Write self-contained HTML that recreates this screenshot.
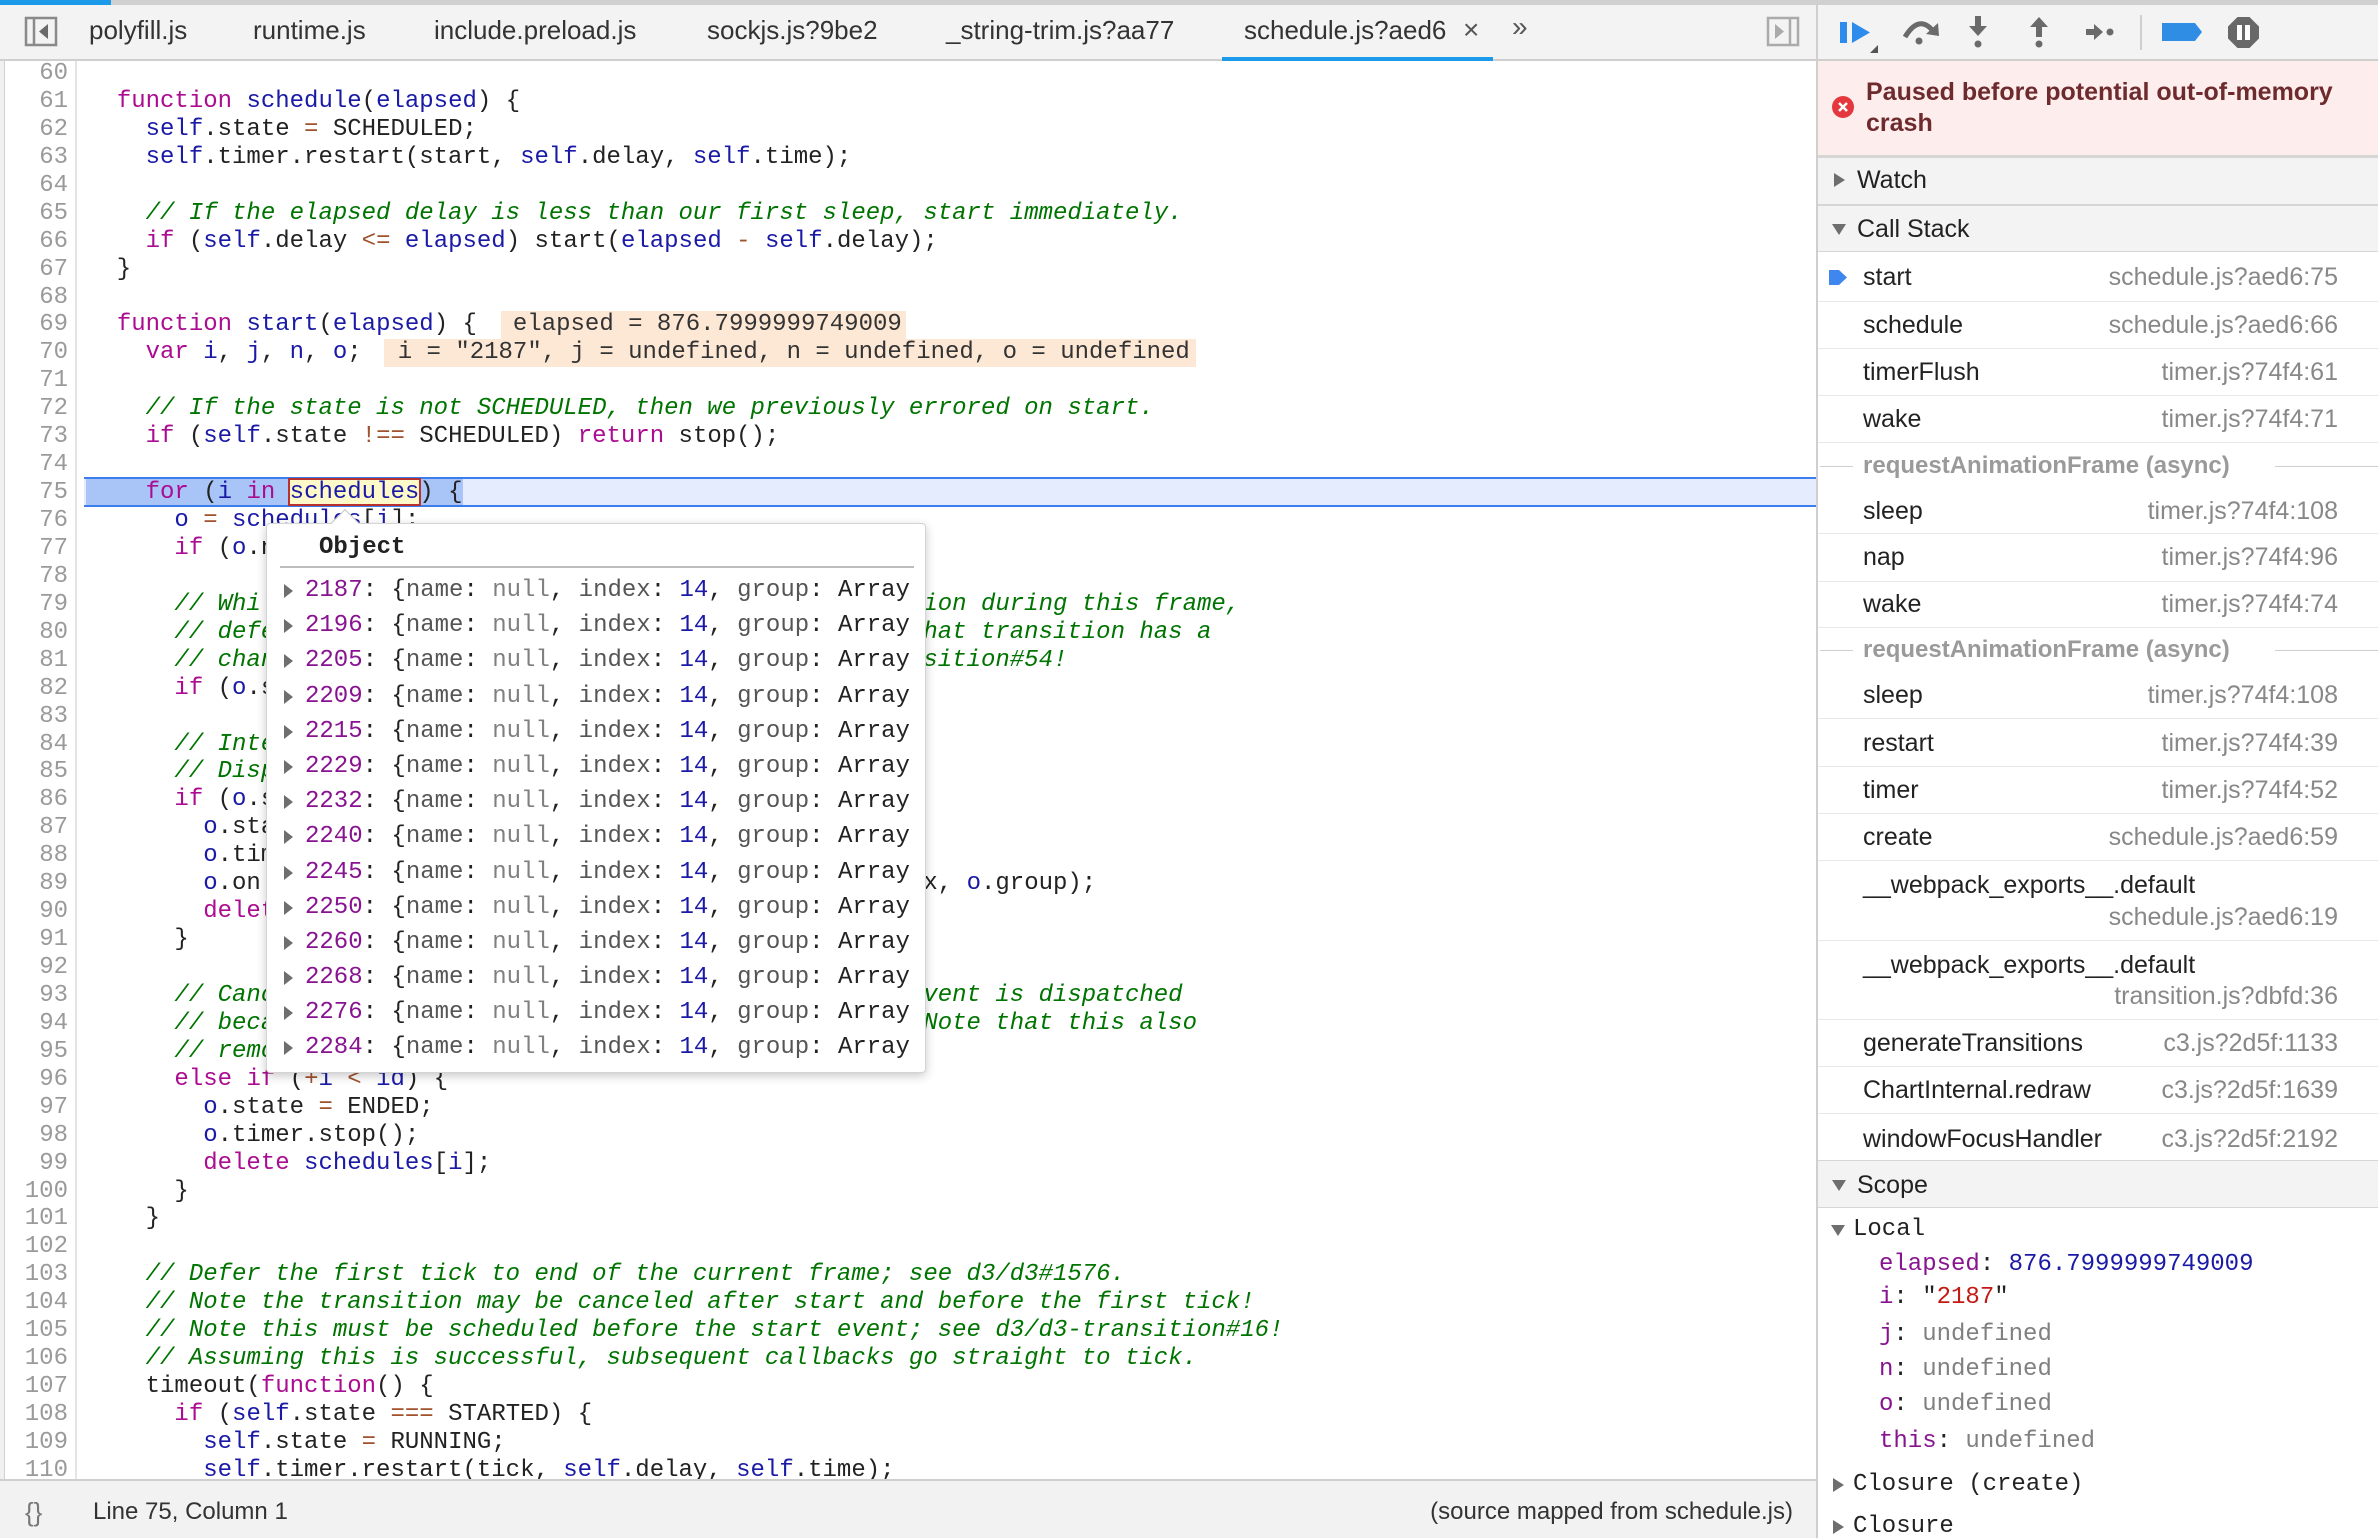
<!DOCTYPE html>
<html><head><meta charset="utf-8">
<style>
*{margin:0;padding:0;box-sizing:border-box}
html,body{width:2378px;height:1538px;overflow:hidden;background:#fff}
body{position:relative;font-family:"Liberation Sans",sans-serif;color:#222}
.a{position:absolute;white-space:pre}
.mono{font-family:"Liberation Mono",monospace;font-size:24px}
k{color:#aa0d91}v{color:#1a1aa6}o{color:#a0522d}c{color:#007400;font-style:italic}t{color:#c41a16}
#code,#gut,#plist{white-space:normal}
#code div{height:27.95px;line-height:27.95px;white-space:pre}
#gut div{height:27.95px;line-height:27.95px;text-align:right}
.tab{position:absolute;top:15px;font-size:26px;color:#333;line-height:30px}
.row{position:absolute;left:1818px;width:560px;height:30px;line-height:30px;font-size:25px}
.row .n{position:absolute;left:45px;color:#222}
.row .l{position:absolute;right:40px;color:#888}
.hl{position:absolute;left:1818px;width:560px;height:1px;background:#e8e8e8}
.hdr{position:absolute;left:1818px;width:560px;background:#f3f3f3;border-top:1px solid #d6d6d6;border-bottom:1px solid #d6d6d6;font-size:25px;color:#222}
.tri-r{position:absolute;width:0;height:0;border-top:7px solid transparent;border-bottom:7px solid transparent;border-left:11px solid #6e6e6e}
.tri-d{position:absolute;width:0;height:0;border-left:7px solid transparent;border-right:7px solid transparent;border-top:11px solid #6e6e6e}
.pr{height:35.2px;line-height:35.2px;white-space:pre;position:relative}
.pr:before{content:"";position:absolute;left:-21px;top:11px;border-top:7px solid transparent;border-bottom:7px solid transparent;border-left:9px solid #6e6e6e}
.pk{color:#881391}.pn{color:#555}.pg{color:#808080}.pb{color:#1a1aa6}
.async{position:absolute;left:1818px;width:560px;height:30px;line-height:30px;font-size:24px;font-weight:bold;color:#9a9a9a}
</style></head><body>

<div class="a" style="left:0;top:0;width:5px;height:1538px;background:#f0f0f0;border-right:1px solid #d0d0d0"></div>

<div class="a" style="left:0;top:0;width:1818px;height:61px;background:#f3f3f3;border-top:5px solid #d0d0d0;border-bottom:2px solid #cfcfcf"></div>
<div class="a" style="left:0;top:0;width:111px;height:5px;background:#1a9ae8"></div>
<svg class="a" style="left:24px;top:16px" width="36" height="32"><rect x="2" y="2" width="30" height="27" fill="none" stroke="#8a8a8a" stroke-width="2.5"/><line x1="10" y1="2" x2="10" y2="29" stroke="#8a8a8a" stroke-width="2.5"/><polygon points="24,8 24,23 15,15.5" fill="#6a6a6a"/></svg>
<div class="tab" style="left:89px">polyfill.js</div>
<div class="tab" style="left:253px">runtime.js</div>
<div class="tab" style="left:434px">include.preload.js</div>
<div class="tab" style="left:707px">sockjs.js?9be2</div>
<div class="tab" style="left:946px">_string-trim.js?aa77</div>
<div class="tab" style="left:1244px">schedule.js?aed6</div>
<div class="tab" style="left:1463px;font-size:28px;color:#555">×</div>
<div class="tab" style="left:1512px;font-size:28px;color:#555;top:12px">»</div>
<div class="a" style="left:1222px;top:57px;width:271px;height:4px;background:#1a9ae8"></div>
<svg class="a" style="left:1766px;top:16px" width="36" height="32"><rect x="2" y="2" width="30" height="27" fill="none" stroke="#aaa" stroke-width="2.5"/><line x1="24" y1="2" x2="24" y2="29" stroke="#aaa" stroke-width="2.5"/><polygon points="9,8 9,23 18,15.5" fill="#aaa"/></svg>

<div class="a" style="left:75px;top:61px;width:2px;height:1419px;background:#e4e4e4"></div>
<div class="a" style="left:10px;top:61px;width:60px;height:1419px;overflow:hidden">
<div id="gut" class="a mono" style="left:0;top:-1px;width:58px;color:#9a9a9a"><div>60</div><div>61</div><div>62</div><div>63</div><div>64</div><div>65</div><div>66</div><div>67</div><div>68</div><div>69</div><div>70</div><div>71</div><div>72</div><div>73</div><div>74</div><div>75</div><div>76</div><div>77</div><div>78</div><div>79</div><div>80</div><div>81</div><div>82</div><div>83</div><div>84</div><div>85</div><div>86</div><div>87</div><div>88</div><div>89</div><div>90</div><div>91</div><div>92</div><div>93</div><div>94</div><div>95</div><div>96</div><div>97</div><div>98</div><div>99</div><div>100</div><div>101</div><div>102</div><div>103</div><div>104</div><div>105</div><div>106</div><div>107</div><div>108</div><div>109</div><div>110</div></div>
</div>

<div class="a" style="left:84px;top:477px;width:1732px;height:30px;background:#e4ecfd;border-top:2px solid #3b7ded;border-bottom:2px solid #3b7ded"></div>
<div class="a" style="left:86px;top:479px;width:377px;height:26px;background:#a9c5f8"></div>
<div class="a" style="left:288px;top:478px;width:133px;height:28px;background:#fdf9c8;border:2px solid #b8312f"></div>

<div class="a" style="left:88px;top:61px;width:1728px;height:1419px;overflow:hidden">
<div id="code" class="a mono" style="left:0;top:-1px;width:1728px;color:#222"><div> </div><div>  <k>function</k> <v>schedule</v>(<v>elapsed</v>) {</div><div>    <v>self</v>.state <o>=</o> SCHEDULED;</div><div>    <v>self</v>.timer.restart(start, <v>self</v>.delay, <v>self</v>.time);</div><div> </div><div>    <c>// If the elapsed delay is less than our first sleep, start immediately.</c></div><div>    <k>if</k> (<v>self</v>.delay <o>&lt;=</o> <v>elapsed</v>) start(<v>elapsed</v> <o>-</o> <v>self</v>.delay);</div><div>  }</div><div> </div><div>  <k>function</k> <v>start</v>(<v>elapsed</v>) {<span style="display:inline-block;margin-left:24px;padding:0 4px 0 12px;background:#fde8d6;color:#333">elapsed = 876.7999999749009</span></div><div>    <k>var</k> <v>i</v>, <v>j</v>, <v>n</v>, <v>o</v>;<span style="display:inline-block;margin-left:22px;padding:0 6px 0 14px;background:#fde8d6;color:#333">i = "2187", j = undefined, n = undefined, o = undefined</span></div><div> </div><div>    <c>// If the state is not SCHEDULED, then we previously errored on start.</c></div><div>    <k>if</k> (<v>self</v>.state <o>!==</o> SCHEDULED) <k>return</k> stop();</div><div> </div><div>    <k>for</k> (<v>i</v> <k>in</k> <v>schedules</v>) {</div><div>      <v>o</v> <o>=</o> <v>schedules</v>[<v>i</v>];</div><div>      <k>if</k> (<v>o</v>.name <o>!==</o> <v>self</v>.name) <k>continue</k>;</div><div> </div><div>      <c>// While this element already has a starting transition during this frame,</c></div><div>      <c>// defer starting an interrupting transition until that transition has a</c></div><div>      <c>// chance to tick (and possibly end); see d3/d3-transition#54!</c></div><div>      <k>if</k> (<v>o</v>.state <o>===</o> STARTED) <k>return</k> timeout(start);</div><div> </div><div>      <c>// Interrupt the active transition, if any.</c></div><div>      <c>// Dispatch the interrupt event.</c></div><div>      <k>if</k> (<v>o</v>.state <o>===</o> RUNNING) {</div><div>        <v>o</v>.state <o>=</o> ENDED;</div><div>        <v>o</v>.timer.stop();</div><div>        <v>o</v>.on.call(<t>"interrupt"</t>, node, node.__data__, <v>o</v>.index, <v>o</v>.group);</div><div>        <k>delete</k> <v>schedules</v>[<v>i</v>];</div><div>      }</div><div> </div><div>      <c>// Cancel any pre-empted transitions. No interrupt event is dispatched</c></div><div>      <c>// because the cancelled transitions never started. Note that this also</c></div><div>      <c>// removes this transition from the pending list!</c></div><div>      <k>else</k> <k>if</k> (<o>+</o><v>i</v> <o>&lt;</o> <v>id</v>) {</div><div>        <v>o</v>.state <o>=</o> ENDED;</div><div>        <v>o</v>.timer.stop();</div><div>        <k>delete</k> <v>schedules</v>[<v>i</v>];</div><div>      }</div><div>    }</div><div> </div><div>    <c>// Defer the first tick to end of the current frame; see d3/d3#1576.</c></div><div>    <c>// Note the transition may be canceled after start and before the first tick!</c></div><div>    <c>// Note this must be scheduled before the start event; see d3/d3-transition#16!</c></div><div>    <c>// Assuming this is successful, subsequent callbacks go straight to tick.</c></div><div>    timeout(<k>function</k>() {</div><div>      <k>if</k> (<v>self</v>.state <o>===</o> STARTED) {</div><div>        <v>self</v>.state <o>=</o> RUNNING;</div><div>        <v>self</v>.timer.restart(tick, <v>self</v>.delay, <v>self</v>.time);</div></div>
</div>

<div class="a" style="left:266px;top:523px;width:660px;height:550px;background:#fff;border:1px solid #d4d4d4;border-radius:4px;box-shadow:0 3px 10px rgba(0,0,0,0.22)"></div>
<div class="a" style="left:335px;top:513px;width:20px;height:20px;background:#fff;border-left:1px solid #c8c8c8;border-top:1px solid #c8c8c8;transform:rotate(45deg)"></div>
<div class="a" style="left:266px;top:524px;width:660px;height:548px;overflow:hidden">
  <div class="a mono" style="left:53px;top:9px;font-weight:bold;color:#222;line-height:30px">Object</div>
  <div class="a" style="left:14px;top:42px;width:634px;height:2px;background:#bdbdbd"></div>
  <div id="plist" class="a mono" style="left:39px;top:49px;color:#222"><div class="pr"><span class="pk">2187</span>: {<span class="pn">name</span>: <span class="pg">null</span>, <span class="pn">index</span>: <span class="pb">14</span>, <span class="pn">group</span>: Array</div><div class="pr"><span class="pk">2196</span>: {<span class="pn">name</span>: <span class="pg">null</span>, <span class="pn">index</span>: <span class="pb">14</span>, <span class="pn">group</span>: Array</div><div class="pr"><span class="pk">2205</span>: {<span class="pn">name</span>: <span class="pg">null</span>, <span class="pn">index</span>: <span class="pb">14</span>, <span class="pn">group</span>: Array</div><div class="pr"><span class="pk">2209</span>: {<span class="pn">name</span>: <span class="pg">null</span>, <span class="pn">index</span>: <span class="pb">14</span>, <span class="pn">group</span>: Array</div><div class="pr"><span class="pk">2215</span>: {<span class="pn">name</span>: <span class="pg">null</span>, <span class="pn">index</span>: <span class="pb">14</span>, <span class="pn">group</span>: Array</div><div class="pr"><span class="pk">2229</span>: {<span class="pn">name</span>: <span class="pg">null</span>, <span class="pn">index</span>: <span class="pb">14</span>, <span class="pn">group</span>: Array</div><div class="pr"><span class="pk">2232</span>: {<span class="pn">name</span>: <span class="pg">null</span>, <span class="pn">index</span>: <span class="pb">14</span>, <span class="pn">group</span>: Array</div><div class="pr"><span class="pk">2240</span>: {<span class="pn">name</span>: <span class="pg">null</span>, <span class="pn">index</span>: <span class="pb">14</span>, <span class="pn">group</span>: Array</div><div class="pr"><span class="pk">2245</span>: {<span class="pn">name</span>: <span class="pg">null</span>, <span class="pn">index</span>: <span class="pb">14</span>, <span class="pn">group</span>: Array</div><div class="pr"><span class="pk">2250</span>: {<span class="pn">name</span>: <span class="pg">null</span>, <span class="pn">index</span>: <span class="pb">14</span>, <span class="pn">group</span>: Array</div><div class="pr"><span class="pk">2260</span>: {<span class="pn">name</span>: <span class="pg">null</span>, <span class="pn">index</span>: <span class="pb">14</span>, <span class="pn">group</span>: Array</div><div class="pr"><span class="pk">2268</span>: {<span class="pn">name</span>: <span class="pg">null</span>, <span class="pn">index</span>: <span class="pb">14</span>, <span class="pn">group</span>: Array</div><div class="pr"><span class="pk">2276</span>: {<span class="pn">name</span>: <span class="pg">null</span>, <span class="pn">index</span>: <span class="pb">14</span>, <span class="pn">group</span>: Array</div><div class="pr"><span class="pk">2284</span>: {<span class="pn">name</span>: <span class="pg">null</span>, <span class="pn">index</span>: <span class="pb">14</span>, <span class="pn">group</span>: Array</div></div>
</div>

<div class="a" style="left:0;top:1479px;width:1818px;height:59px;background:#f2f2f2;border-top:2px solid #cfcfcf"></div>
<div class="a" style="left:25px;top:1496px;font-size:26px;color:#777;line-height:32px">{}</div>
<div class="a" style="left:93px;top:1497px;font-size:24px;color:#333;line-height:30px">Line 75, Column 1</div>
<div class="a" style="left:1293px;top:1497px;font-size:24px;color:#333;line-height:30px;text-align:right;width:500px">(source mapped from schedule.js)</div>

<div class="a" style="left:1816px;top:0;width:2px;height:1538px;background:#cfcfcf"></div>
<div class="a" style="left:1818px;top:0;width:560px;height:61px;background:#f3f3f3;border-top:5px solid #d0d0d0;border-bottom:2px solid #cfcfcf"></div>
<svg class="a" style="left:1818px;top:0" width="560" height="61">
  <rect x="22" y="22" width="7" height="21" fill="#2d8ceb"/>
  <polygon points="34,22 52,32.5 34,43" fill="#2d8ceb"/>
  <polygon points="60,45 60,53 52,53" fill="#555"/>
  <path d="M87 37 Q101 14 115 31" stroke="#6a6a6a" stroke-width="5" fill="none"/>
  <polygon points="108,34 121,36 120,23" fill="#6a6a6a"/>
  <circle cx="101" cy="41" r="3.5" fill="#6a6a6a"/>
  <rect x="157" y="16" width="6" height="12" fill="#6a6a6a"/>
  <polygon points="151,26 169,26 160,36" fill="#6a6a6a"/>
  <circle cx="160" cy="44" r="3.5" fill="#6a6a6a"/>
  <polygon points="212,27 230,27 221,17" fill="#6a6a6a"/>
  <rect x="218" y="26" width="6" height="11" fill="#6a6a6a"/>
  <circle cx="221" cy="44" r="3.5" fill="#6a6a6a"/>
  <rect x="268" y="29" width="10" height="6" fill="#6a6a6a"/>
  <polygon points="276,24 276,40 285,32" fill="#6a6a6a"/>
  <circle cx="292" cy="32" r="3.5" fill="#6a6a6a"/>
  <rect x="322" y="15" width="2" height="35" fill="#cfcfcf"/>
  <path d="M344 23 L377 23 L384 32 L377 41 L344 41 Z" fill="#2f8de4"/>
  <polygon points="419.5,17 431.5,17 441,26.5 441,38.5 431.5,48 419.5,48 410,38.5 410,26.5" fill="#686868"/>
  <rect x="419" y="25" width="5" height="15" fill="#fff"/>
  <rect x="427" y="25" width="5" height="15" fill="#fff"/>
</svg>

<div class="a" style="left:1818px;top:61px;width:560px;height:96px;background:#fdeded;border-bottom:2px solid #d6d6d6"></div>
<svg class="a" style="left:1831px;top:95px" width="24" height="24"><circle cx="12" cy="12" r="11" fill="#e5383e"/><path d="M8 8 L16 16 M16 8 L8 16" stroke="#fff" stroke-width="2.5"/></svg>
<div class="a" style="left:1866px;top:77px;font-size:25px;font-weight:bold;color:#6e2b2e;line-height:31px">Paused before potential out-of-memory
crash</div>

<div class="hdr" style="top:157px;height:48px"></div>
<div class="tri-r" style="left:1834px;top:173px"></div>
<div class="a" style="left:1857px;top:165px;font-size:25px;line-height:30px">Watch</div>
<div class="hdr" style="top:205px;height:47px"></div>
<div class="tri-d" style="left:1832px;top:224px"></div>
<div class="a" style="left:1857px;top:214px;font-size:25px;line-height:30px">Call Stack</div>

<svg class="a" style="left:1828px;top:268px" width="20" height="20"><path d="M1 2 L11 2 L19 9.5 L11 17 L1 17 Z" fill="#3f87ef"/></svg>
<div class="row" style="top:262px"><span class="n">start</span><span class="l">schedule.js?aed6:75</span></div>
<div class="hl" style="top:301px"></div>
<div class="row" style="top:310px"><span class="n">schedule</span><span class="l">schedule.js?aed6:66</span></div>
<div class="hl" style="top:348px"></div>
<div class="row" style="top:357px"><span class="n">timerFlush</span><span class="l">timer.js?74f4:61</span></div>
<div class="hl" style="top:395px"></div>
<div class="row" style="top:404px"><span class="n">wake</span><span class="l">timer.js?74f4:71</span></div>
<div class="hl" style="top:442px"></div>
<div class="async" style="top:451px"><span style="position:absolute;left:2px;top:15px;width:33px;height:1px;background:#cfcfcf"></span><span style="position:absolute;left:45px">requestAnimationFrame (async)</span><span style="position:absolute;left:457px;top:15px;width:103px;height:1px;background:#cfcfcf"></span></div>
<div class="row" style="top:496px"><span class="n">sleep</span><span class="l">timer.js?74f4:108</span></div>
<div class="hl" style="top:533px"></div>
<div class="row" style="top:542px"><span class="n">nap</span><span class="l">timer.js?74f4:96</span></div>
<div class="hl" style="top:581px"></div>
<div class="row" style="top:589px"><span class="n">wake</span><span class="l">timer.js?74f4:74</span></div>
<div class="hl" style="top:627px"></div>
<div class="async" style="top:635px"><span style="position:absolute;left:2px;top:15px;width:33px;height:1px;background:#cfcfcf"></span><span style="position:absolute;left:45px">requestAnimationFrame (async)</span><span style="position:absolute;left:457px;top:15px;width:103px;height:1px;background:#cfcfcf"></span></div>
<div class="row" style="top:680px"><span class="n">sleep</span><span class="l">timer.js?74f4:108</span></div>
<div class="hl" style="top:718px"></div>
<div class="row" style="top:728px"><span class="n">restart</span><span class="l">timer.js?74f4:39</span></div>
<div class="hl" style="top:766px"></div>
<div class="row" style="top:775px"><span class="n">timer</span><span class="l">timer.js?74f4:52</span></div>
<div class="hl" style="top:813px"></div>
<div class="row" style="top:822px"><span class="n">create</span><span class="l">schedule.js?aed6:59</span></div>
<div class="hl" style="top:860px"></div>
<div class="row" style="top:870px"><span class="n">__webpack_exports__.default</span></div>
<div class="row" style="top:902px"><span class="l">schedule.js?aed6:19</span></div>
<div class="hl" style="top:940px"></div>
<div class="row" style="top:950px"><span class="n">__webpack_exports__.default</span></div>
<div class="row" style="top:981px"><span class="l">transition.js?dbfd:36</span></div>
<div class="hl" style="top:1019px"></div>
<div class="row" style="top:1028px"><span class="n">generateTransitions</span><span class="l">c3.js?2d5f:1133</span></div>
<div class="hl" style="top:1066px"></div>
<div class="row" style="top:1075px"><span class="n">ChartInternal.redraw</span><span class="l">c3.js?2d5f:1639</span></div>
<div class="hl" style="top:1113px"></div>
<div class="row" style="top:1124px"><span class="n">windowFocusHandler</span><span class="l">c3.js?2d5f:2192</span></div>

<div class="hdr" style="top:1160px;height:48px"></div>
<div class="tri-d" style="left:1832px;top:1180px"></div>
<div class="a" style="left:1857px;top:1170px;font-size:25px;line-height:30px">Scope</div>

<div class="tri-d" style="left:1831px;top:1225px"></div>
<div class="a mono" style="left:1853px;top:1215px;line-height:30px;color:#222">Local</div>
<div class="a mono" style="left:1879px;top:1250px;line-height:30px"><span class="pk">elapsed</span>: <span class="pb">876.7999999749009</span></div>
<div class="a mono" style="left:1879px;top:1283px;line-height:30px"><span class="pk">i</span>: "<t>2187</t>"</div>
<div class="a mono" style="left:1879px;top:1320px;line-height:30px"><span class="pk">j</span>: <span class="pg">undefined</span></div>
<div class="a mono" style="left:1879px;top:1355px;line-height:30px"><span class="pk">n</span>: <span class="pg">undefined</span></div>
<div class="a mono" style="left:1879px;top:1390px;line-height:30px"><span class="pk">o</span>: <span class="pg">undefined</span></div>
<div class="a mono" style="left:1879px;top:1427px;line-height:30px"><span class="pk">this</span>: <span class="pg">undefined</span></div>
<div class="tri-r" style="left:1833px;top:1478px"></div>
<div class="a mono" style="left:1853px;top:1470px;line-height:30px;color:#222">Closure (create)</div>
<div class="tri-r" style="left:1833px;top:1520px"></div>
<div class="a mono" style="left:1853px;top:1512px;line-height:30px;color:#222">Closure</div>

</body></html>
